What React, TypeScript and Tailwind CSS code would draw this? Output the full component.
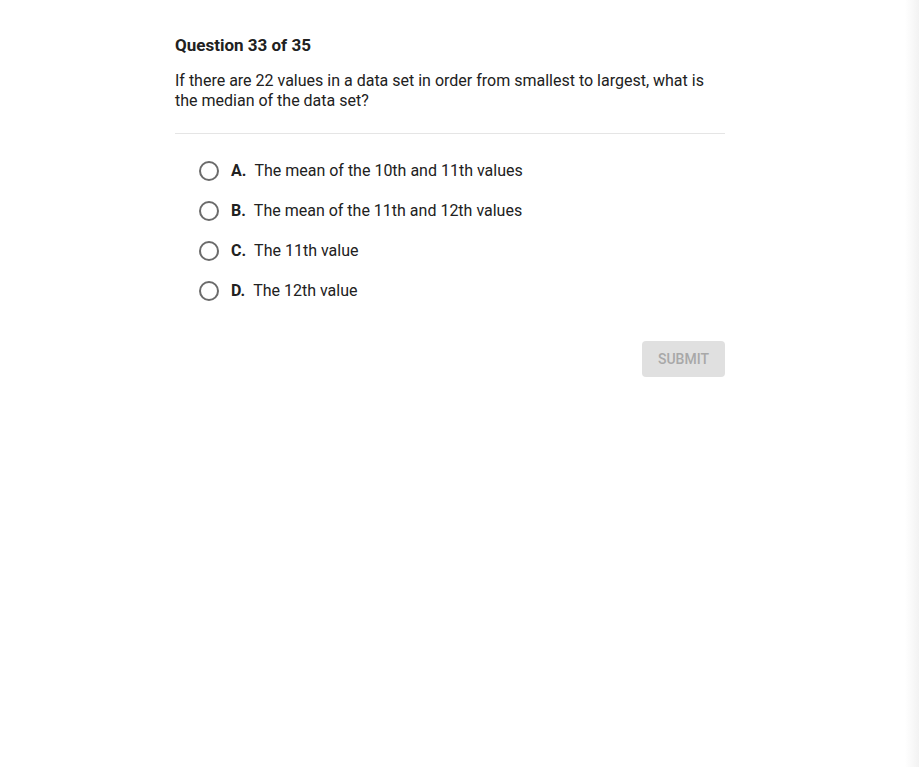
const options = [
  { letter: "A.", text: "The mean of the 10th and 11th values" },
  { letter: "B.", text: "The mean of the 11th and 12th values" },
  { letter: "C.", text: "The 11th value" },
  { letter: "D.", text: "The 12th value" },
];

export default function App() {
  return (
    <div className="flex h-[767px] w-full bg-white font-['Roboto',sans-serif] text-[#212121]">
      <div className="flex-1">
        <div className="ml-[175px] w-[550px] pt-[34px]">
          <h1 className="text-[17px] font-bold leading-[22px]">Question 33 of 35</h1>
          <p className="mt-[15px] text-[16px] leading-[20px]">
            If there are 22 values in a data set in order from smallest to largest, what is the median of the data set?
          </p>
          <div className="mt-[22px] h-px bg-[#e5e5e5]" />

          <div className="mt-[27px] flex flex-col gap-[20px] pl-[24px]">
            {options.map((o) => (
              <label key={o.letter} className="flex h-[20px] items-center">
                <span className="h-[20px] w-[20px] rounded-full border-2 border-[#6b6b6b]" />
                <span className="ml-[12px] text-[16px] font-bold">{o.letter}</span>
                <span className="ml-[8px] text-[16px]">{o.text}</span>
              </label>
            ))}
          </div>

          <div className="mt-[40px] flex justify-end">
            <button className="h-[36px] w-[83px] rounded-[4px] bg-[#e0e0e0] text-[14px] font-medium text-[#a8a8a8]">
              SUBMIT
            </button>
          </div>
        </div>
      </div>
      <div className="w-[14px] bg-gradient-to-r from-white to-[#f2f2f2]" />
    </div>
  );
}
